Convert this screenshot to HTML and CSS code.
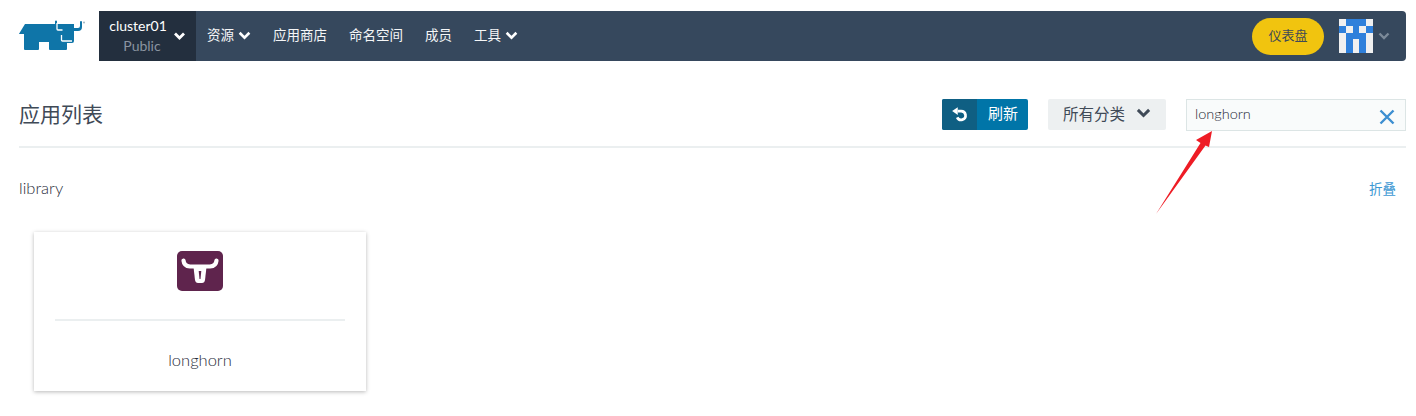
FILE: index.html
```html
<!DOCTYPE html>
<html lang="zh-CN">
<head>
  <meta charset="UTF-8" />
  <title>应用列表</title>
  <link rel="stylesheet" href="styles.css">
</head>
<body>
  <header class="top">
    <div class="logo">
      <svg width="67" height="33" viewBox="19 18 67 33">
        <path fill="#0f75a8" d="M25 24H55V21.500Q55 20.500 56 20.500T57 21.500V24H74V28H78Q80 28 80 26V22Q80 21 81 21T82 22V27Q82 31 78 31H74V41Q74 43 72 43H67V49Q67 50 66 50H50Q49 50 49 49V42H39V49Q39 50 38 50H25Q24 50 24 49V34H20Q18.500 34 19.500 33Z"/>
        <path fill="none" stroke="#fff" stroke-width="1.300" d="M57 23V29Q57 30 58 30H62.500M61.500 35V40Q61.500 41 62.500 41H72"/>
        <circle cx="84" cy="22.500" r="1" fill="#9fb4c0"/>
      </svg>
    </div>
    <nav class="bar">
      <div class="cluster">
        <div class="cluster-names">
          <span class="cluster-name">cluster01</span>
          <span class="cluster-scope">Public</span>
        </div>
        <svg class="chev chev-cluster" viewBox="0 0 12 8"><path d="M1.500 1.500 6 6l4.500-4.500"/></svg>
      </div>
      <ul class="menu">
        <li>资源<svg class="chev" viewBox="0 0 12 8"><path d="M1.500 1.500 6 6l4.500-4.500"/></svg></li>
        <li>应用商店</li>
        <li>命名空间</li>
        <li>成员</li>
        <li>工具<svg class="chev" viewBox="0 0 12 8"><path d="M1.500 1.500 6 6l4.500-4.500"/></svg></li>
      </ul>
      <div class="bar-right">
        <button class="dash">仪表盘</button>
        <svg class="avatar" viewBox="0 0 5 5" shape-rendering="crispEdges">
          <rect width="5" height="5" fill="#f0f0f0"/>
          <path fill="#2f80db" d="M1 0h3v1H1ZM0 1h1v1H0ZM2 1h1v1H2ZM4 1h1v1H4ZM1 2h3v1H1ZM1 3h1v2H1ZM3 3h1v2H3Z"/>
        </svg>
        <svg class="chev chev-user" viewBox="0 0 12 8"><path d="M1.500 1.500 6 6l4.500-4.500"/></svg>
      </div>
    </nav>
  </header>

  <main class="content">
    <div class="title-row">
      <h1>应用列表</h1>
      <div class="actions">
        <button class="refresh">
          <span class="refresh-icon">
            <svg width="18" height="16" viewBox="0 0 16 14"><path fill="none" stroke="#fff" stroke-width="2.400" d="M6 3.500H9a3.900 3.900 0 1 1-3.500 5.600"/><path fill="#fff" d="M1 3.500 6 0v7Z"/></svg>
          </span>
          <span class="refresh-label">刷新</span>
        </button>
        <button class="category">所有分类<svg class="chev" viewBox="0 0 12 8"><path d="M1.500 1.500 6 6l4.500-4.500"/></svg></button>
        <div class="search">
          <span class="search-text">longhorn</span>
          <svg width="16" height="16" viewBox="0 0 16 16"><path stroke="#3d8fd1" stroke-width="2.400" d="M1.500 1.500l13 13M14.500 1.500l-13 13"/></svg>
        </div>
      </div>
    </div>

    <div class="section-head">
      <span>library</span>
      <a href="#">折叠</a>
    </div>

    <div class="card">
      <div class="card-top">
        <svg width="46" height="40" viewBox="0 0 46 40">
          <rect width="46" height="40" rx="5" fill="#5f244d"/>
          <path fill="none" stroke="#fff" stroke-width="4.200" stroke-linecap="round" d="M6.500 9.500Q7 15 13 15.500H33Q39 15 39.500 9.500"/>
          <path fill="#fff" d="M16.500 16H29.500L28 29Q27.500 32 25 32H21Q18.500 32 18 29Z"/>
          <path fill="#5f244d" d="M21.700 20H24.300L23.500 28H22.500Z"/>
        </svg>
      </div>
      <div class="card-name">longhorn</div>
    </div>
  </main>

  <svg class="arrow" width="60" height="86" viewBox="0 0 60 86">
    <path fill="#ee1c25" d="M57 1 54 17 50.500 15.500 1 84 45.500 13 41 10Z"/>
  </svg>
</body>
</html>
```

FILE: styles.css
```css
* {
  box-sizing: border-box;
}
body {
  margin: 0;
  padding: 11px 10px 25px 19px;
  font-family: Lato, "Noto Sans CJK SC", sans-serif;
  color: #3f4a57;
  background: #fff;
  position: relative;
}
button {
  font-family: inherit;
  border: none;
  padding: 0;
}
.chev {
  width: 12px;
  height: 8px;
  fill: none;
  stroke: #fff;
  stroke-width: 2.400;
}

/* top bar */
.top {
  display: flex;
  height: 50px;
}
.logo {
  width: 80px;
  padding-top: 7px;
}
.bar {
  flex: 1;
  display: flex;
  align-items: center;
  background: #36485d;
  color: #fff;
  border-radius: 0 4px 4px 0;
}
.cluster {
  width: 97px;
  height: 50px;
  background: #232f3e;
  display: flex;
  align-items: center;
  padding-left: 10px;
}
.cluster-names {
  display: flex;
  flex-direction: column;
  align-items: center;
  width: 58px;
  font-size: 14px;
  line-height: 20px;
}
.cluster-scope {
  color: #8a94a0;
  padding-left: 8px;
}
.chev-cluster {
  margin-left: 6px;
  stroke-width: 2.800;
  width: 13px;
}
.menu {
  list-style: none;
  display: flex;
  gap: 22px;
  margin: 0;
  padding: 0 0 4px 11px;
  font-size: 13.500px;
  color: #f5f6f7;
}
.menu li {
  display: flex;
  align-items: center;
  gap: 4px;
}
.menu .chev {
  width: 13px;
  height: 9px;
  margin-top: 3px;
}
.bar-right {
  margin-left: auto;
  display: flex;
  align-items: center;
  padding-right: 16px;
}
.dash {
  width: 72px;
  height: 37px;
  border-radius: 19px;
  background: #f1c40f;
  color: #3f4a57;
  font-size: 13px;
  padding-bottom: 3px;
}
.avatar {
  width: 34px;
  height: 34px;
  margin-left: 15px;
}
.chev-user {
  margin-left: 5px;
  stroke: #7c8a99;
}

/* page */
.title-row {
  display: flex;
  align-items: center;
  justify-content: space-between;
  height: 87px;
  padding-top: 38px;
  padding-bottom: 16px;
  border-bottom: 2px solid #ebeff0;
}
h1 {
  margin: 0 0 4px;
  font-size: 21px;
  font-weight: 400;
  color: #3f4a57;
}
.actions {
  display: flex;
  align-items: center;
}
.refresh {
  display: flex;
  width: 86px;
  height: 31px;
  border-radius: 2px;
  overflow: hidden;
  background: #0075a8;
  color: #fff;
  font-size: 15px;
}
.refresh-icon {
  width: 35px;
  height: 31px;
  background: #0f5f83;
  display: flex;
  align-items: center;
  justify-content: center;
}
.refresh-label {
  flex: 1;
  line-height: 29px;
  padding-left: 1px;
}
.category {
  width: 118px;
  height: 31px;
  margin-left: 20px;
  border-radius: 2px;
  background: #edf0f1;
  color: #3f4a57;
  font-size: 15.500px;
  display: flex;
  align-items: center;
  justify-content: center;
  gap: 11px;
  padding-bottom: 3px;
}
.category .chev {
  width: 15px;
  height: 10px;
  stroke: #3f4a57;
}
.search {
  width: 220px;
  height: 32px;
  margin-left: 20px;
  border: 1px solid #dce5e5;
  background: #f9fbfb;
  display: flex;
  align-items: center;
  justify-content: space-between;
  padding: 0 10px 0 8px;
  font-size: 14.500px;
  font-weight: 300;
  color: #1f2a37;
}
.search-text {
  margin-bottom: 2px;
}
.search svg {
  margin-top: 5px;
}
.section-head {
  display: flex;
  justify-content: space-between;
  align-items: center;
  padding: 0 10px 0 0;
  margin-top: 29px;
  height: 22px;
  font-size: 16.500px;
  font-weight: 300;
  color: #1f2a37;
}
.section-head a {
  color: #3d98d3;
  font-size: 13.500px;
  font-weight: 400;
  text-decoration: none;
}
.card {
  width: 332px;
  height: 159px;
  margin: 33px 0 0 15px;
  padding: 0 21px;
  background: #fff;
  box-shadow: 0 1px 4px rgba(0, 0, 0, 0.28);
}
.card-top {
  height: 89px;
  padding-top: 19px;
  border-bottom: 2px solid #ebeff0;
  text-align: center;
}
.card-name {
  text-align: center;
  font-size: 16.500px;
  font-weight: 300;
  color: #1f2a37;
  line-height: 22px;
  padding-top: 28px;
}

/* annotation drawn on the screenshot */
.arrow {
  position: absolute;
  left: 1155px;
  top: 130px;
}
```
